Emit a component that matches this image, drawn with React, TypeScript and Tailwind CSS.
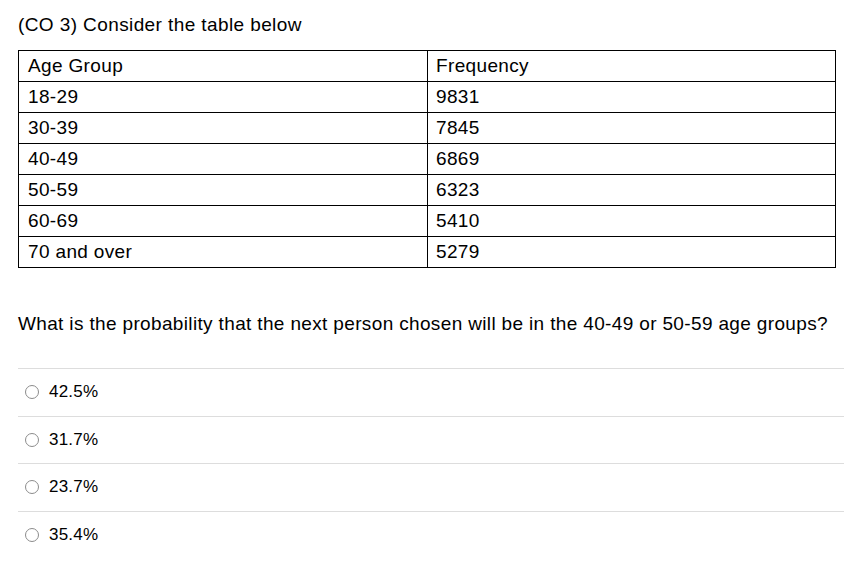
import React from 'react'

const rows = [
  ['Age Group', 'Frequency'],
  ['18-29', '9831'],
  ['30-39', '7845'],
  ['40-49', '6869'],
  ['50-59', '6323'],
  ['60-69', '5410'],
  ['70 and over', '5279'],
]

const options = ['42.5%', '31.7%', '23.7%', '35.4%']

export default function App() {
  return (
    <div
      className="min-h-[570px] bg-white pl-[18px] pr-[9px] pt-[14px] text-black"
      style={{ fontFamily: '"Liberation Sans", Arial, sans-serif' }}
    >
      <div className="h-[22px] text-[19px] leading-[22px] tracking-[0.4px]">(CO 3) Consider the table below</div>

      <table className="mt-[14px] w-[818px] border-collapse text-[19px] tracking-[0.35px]">
        <tbody>
          {rows.map(([age, freq]) => (
            <tr key={age} className="h-[31px]">
              <td className="w-[409px] border border-black pl-[9px] leading-[20px]">{age}</td>
              <td className="border border-black pl-[8px] leading-[20px]">{freq}</td>
            </tr>
          ))}
        </tbody>
      </table>

      <div className="mt-[45px] h-[22px] text-[19px] leading-[22px] tracking-[0.35px]">
        What is the probability that the next person chosen will be in the 40-49 or 50-59 age groups?
      </div>

      <div className="mt-[33px]">
        {options.map((opt) => (
          <div key={opt} className="flex h-[47.5px] items-center border-t border-[#dddddd] pl-[7px]">
            <span className="h-[14px] w-[14px] rounded-full border border-[#8c8c8c]" />
            <span className="ml-[10px] text-[17px] leading-[20px] tracking-[0.2px]">{opt}</span>
          </div>
        ))}
      </div>
    </div>
  )
}
